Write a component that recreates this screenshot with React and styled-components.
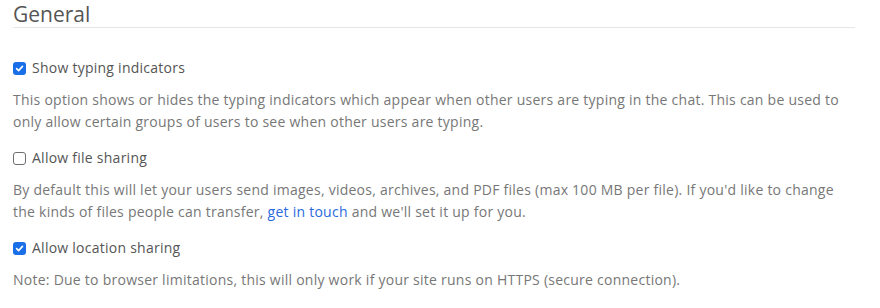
import React from "react";
import styled, { createGlobalStyle } from "styled-components";

const Global = createGlobalStyle`
  html, body { margin: 0; padding: 0; background: #fff; }
  body { font-family: "Open Sans", Lato, sans-serif; }
`;

const Page = styled.div`
  padding: 0 25px 0 13px;
  width: 842px;
`;

const Heading = styled.h2`
  margin: 0;
  padding: 2px 0 1px;
  font-size: 21px;
  font-weight: 400;
  line-height: 24px;
  color: #555;
  border-bottom: 1px solid #e6e6e6;
`;

const Options = styled.div`
  padding-top: 30px;
  display: flex;
  flex-direction: column;
`;

const Option = styled.div`
  margin-bottom: 15px;
`;

const Label = styled.label`
  display: flex;
  align-items: center;
  gap: 6px;
  font-size: 14px;
  letter-spacing: 0.25px;
  line-height: 20px;
  color: #555;
`;

const Box = styled.span`
  width: 13px;
  height: 13px;
  box-sizing: border-box;
  border-radius: 3px;
  display: inline-flex;
  align-items: center;
  justify-content: center;
  border: ${(p) => (p.checked ? "none" : "1px solid #6f6f6f")};
  background: ${(p) => (p.checked ? "#1a6fe8" : "#fff")};
`;

const Desc = styled.p`
  margin: 11px 0 0;
  font-size: 14px;
  letter-spacing: 0.25px;
  line-height: 22px;
  color: #777;
`;

const Link = styled.a`
  color: #2a6ae0;
  text-decoration: none;
`;

function Check({ checked }) {
  return (
    <Box checked={checked}>
      {checked && (
        <svg width="9" height="9" viewBox="0 0 10 10">
          <path d="M1.8 5.2 L4 7.4 L8.3 2.6" fill="none" stroke="#fff" strokeWidth="1.8" strokeLinecap="round" strokeLinejoin="round" />
        </svg>
      )}
    </Box>
  );
}

export default function App() {
  return (
    <>
      <Global />
      <Page>
        <Heading>General</Heading>
        <Options>
          <Option>
            <Label><Check checked />Show typing indicators</Label>
            <Desc>
              This option shows or hides the typing indicators which appear when other users are typing in the chat. This can be used to only allow certain groups of users to see when other users are typing.
            </Desc>
          </Option>
          <Option>
            <Label><Check />Allow file sharing</Label>
            <Desc>
              By default this will let your users send images, videos, archives, and PDF files (max 100 MB per file). If you'd like to change the kinds of files people can transfer, <Link href="#">get in touch</Link> and we'll set it up for you.
            </Desc>
          </Option>
          <Option>
            <Label><Check checked />Allow location sharing</Label>
            <Desc>
              Note: Due to browser limitations, this will only work if your site runs on HTTPS (secure connection).
            </Desc>
          </Option>
        </Options>
      </Page>
    </>
  );
}
